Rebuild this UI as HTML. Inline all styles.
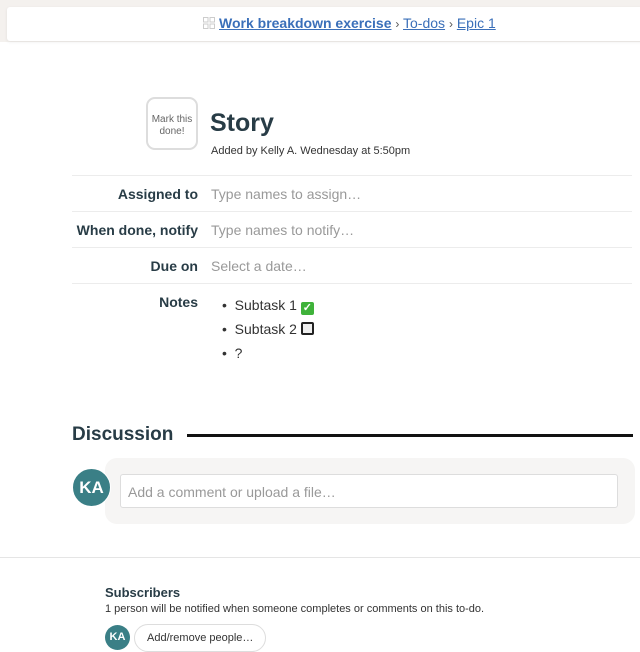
<!DOCTYPE html>
<html><head><style>
*{margin:0;padding:0;box-sizing:border-box}
body{width:640px;height:640px;overflow:hidden;background:#fff;font-family:"Liberation Sans",sans-serif;color:#283c46;position:relative}
.top{position:absolute;left:0;top:0;width:640px;height:42px;background:#f4f1ee}
.card{position:absolute;left:7px;top:7px;width:640px;height:34px;background:#fff;box-shadow:0 1px 3px rgba(0,0,0,.08);border-radius:3px}
.crumb{position:absolute;left:203px;top:15px;font-size:14px;color:#3a6fb9;white-space:nowrap}
.crumb a{color:#3a6fb9;text-decoration:underline}
.crumb b a{font-weight:bold}
.crumb .sep{color:#555;font-size:12px}
.abs{position:absolute;white-space:nowrap}
.check{position:absolute;left:146px;top:97px;width:52px;height:53px;border:2px solid #ddd;border-radius:9px;font-size:10px;color:#666;text-align:center;padding-top:15px;line-height:12px}
.row{position:absolute;left:72px;width:560px;border-top:1px solid #ececec}
.lbl{position:absolute;right:442px;font-size:14px;font-weight:bold;color:#283c46;white-space:nowrap}
.ph{position:absolute;left:211px;font-size:14px;color:#999;white-space:nowrap}
</style></head><body>
<div class="top"></div>
<div class="card"></div>
<div class="crumb"><span style="display:inline-block;width:12px;height:12px;vertical-align:-1px;margin-right:4px"><svg width="12" height="12"><g fill="none" stroke="#ccc"><rect x="0.5" y="0.5" width="4.5" height="4.5"/><rect x="7" y="0.5" width="4.5" height="4.5"/><rect x="0.5" y="7" width="4.5" height="4.5"/><rect x="7" y="7" width="4.5" height="4.5"/></g></svg></span><b><a>Work breakdown exercise</a></b> <span class="sep">›</span> <a>To-dos</a> <span class="sep">›</span> <a>Epic 1</a></div>
<div class="check">Mark this<br>done!</div>
<div class="abs" style="left:210px;top:109px;font-size:25px;font-weight:bold;color:#283c46">Story</div>
<div class="abs" style="left:211px;top:145px;font-size:11px;color:#333">Added by Kelly A. Wednesday at 5:50pm</div>
<div class="row" style="top:175px"></div>
<div class="lbl" style="top:186px">Assigned to</div><div class="ph" style="top:186px">Type names to assign…</div>
<div class="row" style="top:211px"></div>
<div class="lbl" style="top:222px">When done, notify</div><div class="ph" style="top:222px">Type names to notify…</div>
<div class="row" style="top:247px"></div>
<div class="lbl" style="top:258px">Due on</div><div class="ph" style="top:258px">Select a date…</div>
<div class="row" style="top:283px"></div>
<div class="lbl" style="top:294px">Notes</div>
<div class="abs" style="left:222px;top:293px;font-size:14px;color:#333;line-height:24px">
• &nbsp;Subtask 1 <span style="display:inline-block;width:13px;height:13px;background:#3fb23a;border-radius:2px;color:#fff;font-size:11px;font-weight:bold;line-height:13px;text-align:center;vertical-align:-1px">✓</span><br>
• &nbsp;Subtask 2 <span style="display:inline-block;width:13px;height:13px;background:#222;border-radius:2px;vertical-align:-1px;padding:2px"><span style="display:block;width:9px;height:9px;background:#eee"></span></span><br>
• &nbsp;?</div>
<div class="abs" style="left:72px;top:424px;font-size:19px;font-weight:bold;color:#283c46">Discussion</div>
<div style="position:absolute;left:187px;top:434px;width:446px;height:3px;background:#111"></div>
<div style="position:absolute;left:105px;top:458px;width:530px;height:66px;background:#f6f5f4;border-radius:12px"></div>
<div style="position:absolute;left:72px;top:468px;width:39px;height:39px;border-radius:50%;background:#3a7f86;color:#fff;font-size:17px;font-weight:bold;text-align:center;line-height:37px;border:1px solid #fff">KA</div>
<div style="position:absolute;left:120px;top:474px;width:498px;height:34px;background:#fff;border:1px solid #ddd;border-radius:3px;font-size:14px;color:#999;padding:9px 7px">Add a comment or upload a file…</div>
<div style="position:absolute;left:0;top:557px;width:640px;height:1px;background:#e5e5e5"></div>
<div class="abs" style="left:105px;top:585px;font-size:13px;font-weight:bold;color:#283c46">Subscribers</div>
<div class="abs" style="left:105px;top:603px;font-size:11px;color:#333">1 person will be notified when someone completes or comments on this to-do.</div>
<div style="position:absolute;left:105px;top:625px;width:25px;height:25px;border-radius:50%;background:#3a7f86;color:#fff;font-size:11px;font-weight:bold;text-align:center;line-height:25px">KA</div>
<div style="position:absolute;left:134px;top:624px;width:132px;height:28px;border:1px solid #ddd;border-radius:14px;font-size:11px;color:#333;padding:7px 0 0 12px">Add/remove people…</div>
</body></html>
